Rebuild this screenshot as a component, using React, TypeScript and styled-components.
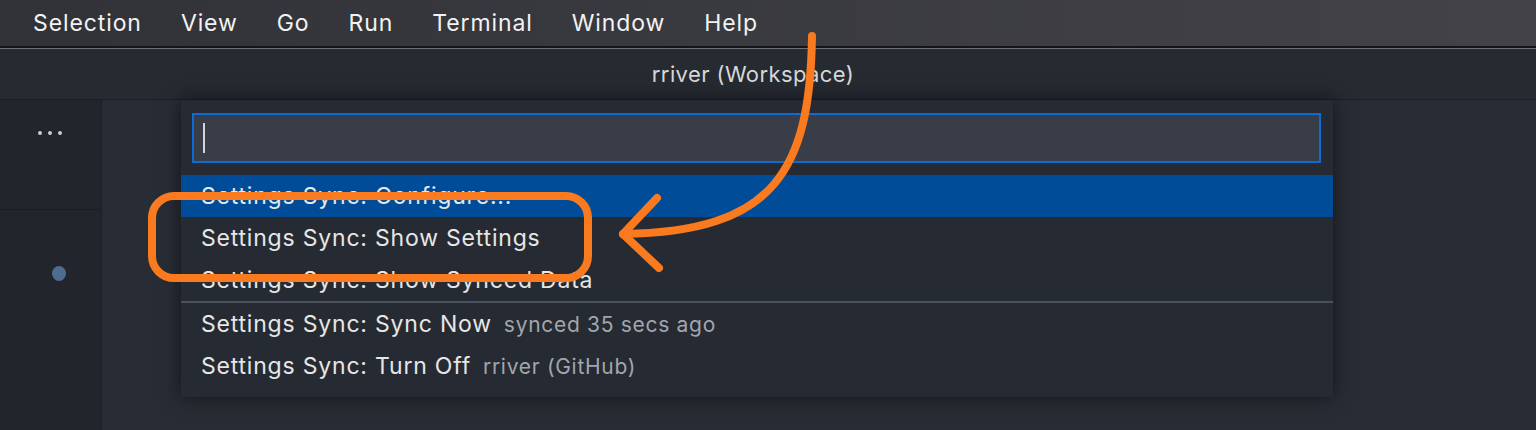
import styled, { createGlobalStyle } from "styled-components"

const GlobalStyle = createGlobalStyle`
    html, body {
        margin: 0;
        padding: 0;
        background: #282c34;
    }
    body {
        font-family: Inter, "Liberation Sans", sans-serif;
        overflow: hidden;
    }
`

const Screen = styled.div`
    position: relative;
    width: 1536px;
    height: 430px;
    display: flex;
    flex-direction: column;
    background: #282c34;
    overflow: hidden;
`

const MenuBar = styled.div`
    height: 46px;
    display: flex;
    align-items: center;
    gap: 39px;
    padding-left: 33px;
    background: linear-gradient(90deg, #313237 0%, #393a3f 45%, #434248 100%);
    border-bottom: 2px solid #151517;
`

const MenuItem = styled.span`
    font-size: 23px;
    color: #f2f2f2;
    letter-spacing: 0.9px;
`

const TitleBar = styled.div`
    height: 50px;
    display: flex;
    align-items: center;
    justify-content: center;
    background: #262a31;
    border-top: 1px solid #707176;
    border-bottom: 1px solid #1c1f25;
    font-size: 22px;
    letter-spacing: 0.4px;
    color: #d8d8d8;
    padding-right: 30px;
`

const Workbench = styled.div`
    flex: 1;
    display: flex;
`

const Sidebar = styled.div`
    width: 101px;
    background: #22262c;
    border-right: 1px solid #1c1f24;
    display: flex;
    flex-direction: column;
`

const SidebarHeader = styled.div`
    height: 110px;
    border-bottom: 1px solid #1a1d22;
    display: flex;
    gap: 6px;
    padding: 31px 0 0 38px;
    box-sizing: border-box;
`

const MoreDot = styled.span`
    width: 4px;
    height: 4px;
    border-radius: 50%;
    background: #c9cbcf;
`

const SidebarBody = styled.div`
    padding: 56px 0 0 52px;
`

const StatusDot = styled.div`
    width: 14px;
    height: 15px;
    border-radius: 50%;
    background: #4e6b90;
`

const Editor = styled.div`
    position: relative;
    flex: 1;
    background: #282c34;
`

const QuickPick = styled.div`
    position: absolute;
    left: 79px;
    top: 0;
    width: 1152px;
    background: #262a32;
    box-shadow: 0 0 18px rgba(0, 0, 0, 0.55);
    padding: 13px 0 10px;
`

const InputBox = styled.div`
    margin: 0 12px 0 11px;
    height: 50px;
    box-sizing: border-box;
    border: 2px solid #0d6bd5;
    background: #383d47;
    display: flex;
    align-items: center;
    padding-left: 9px;
`

const Caret = styled.span`
    width: 2px;
    height: 30px;
    background: #d4d4d4;
`

const List = styled.div`
    margin-top: 12px;
`

const Row = styled.div<{ selected?: boolean }>`
    height: 42px;
    display: flex;
    align-items: center;
    padding-left: 20px;
    font-size: 23px;
    letter-spacing: 0.8px;
    color: #e6e6e6;
    background: ${props => props.selected ? "#014c98" : "transparent"};
    white-space: nowrap;
`

const Description = styled.span`
    margin-left: 12px;
    font-size: 21px;
    letter-spacing: 0.7px;
    color: #a2a6ad;
`

const Separator = styled.div`
    height: 2px;
    background: #4b515b;
`

const Annotation = styled.svg`
    position: absolute;
    left: 0;
    top: 0;
    pointer-events: none;
`

interface Command {
    label: string;
    description?: string;
    selected?: boolean;
}

const recent: Command[] = [
    { label: "Settings Sync: Configure...", selected: true },
    { label: "Settings Sync: Show Settings" },
    { label: "Settings Sync: Show Synced Data" },
]

const other: Command[] = [
    { label: "Settings Sync: Sync Now", description: "synced 35 secs ago" },
    { label: "Settings Sync: Turn Off", description: "rriver (GitHub)" },
]

const menus = ["Selection", "View", "Go", "Run", "Terminal", "Window", "Help"]

const CommandRow = ({ label, description, selected }: Command) => (
    <Row selected={selected}>
        {label}
        {description && <Description>{description}</Description>}
    </Row>
)

const App = () => {
    return (
        <Screen>
            <GlobalStyle />
            <MenuBar>
                {menus.map(m => <MenuItem key={m}>{m}</MenuItem>)}
            </MenuBar>
            <TitleBar>rriver (Workspace)</TitleBar>
            <Workbench>
                <Sidebar>
                    <SidebarHeader>
                        <MoreDot />
                        <MoreDot />
                        <MoreDot />
                    </SidebarHeader>
                    <SidebarBody>
                        <StatusDot />
                    </SidebarBody>
                </Sidebar>
                <Editor>
                    <QuickPick>
                        <InputBox>
                            <Caret />
                        </InputBox>
                        <List>
                            {recent.map(c => <CommandRow key={c.label} {...c} />)}
                            <Separator />
                            {other.map(c => <CommandRow key={c.label} {...c} />)}
                        </List>
                    </QuickPick>
                </Editor>
            </Workbench>
            <Annotation width="1536" height="430" viewBox="0 0 1536 430">
                <g fill="none" stroke="#f97a1f" strokeWidth="8" strokeLinecap="round" strokeLinejoin="round">
                    <rect x="152" y="196" width="436" height="82" rx="22" />
                    <path d="M812 36 C810 170 775 232 623 234" />
                    <path d="M657 198 L623 234 L659 268" />
                </g>
            </Annotation>
        </Screen>
    )
}

export default App
